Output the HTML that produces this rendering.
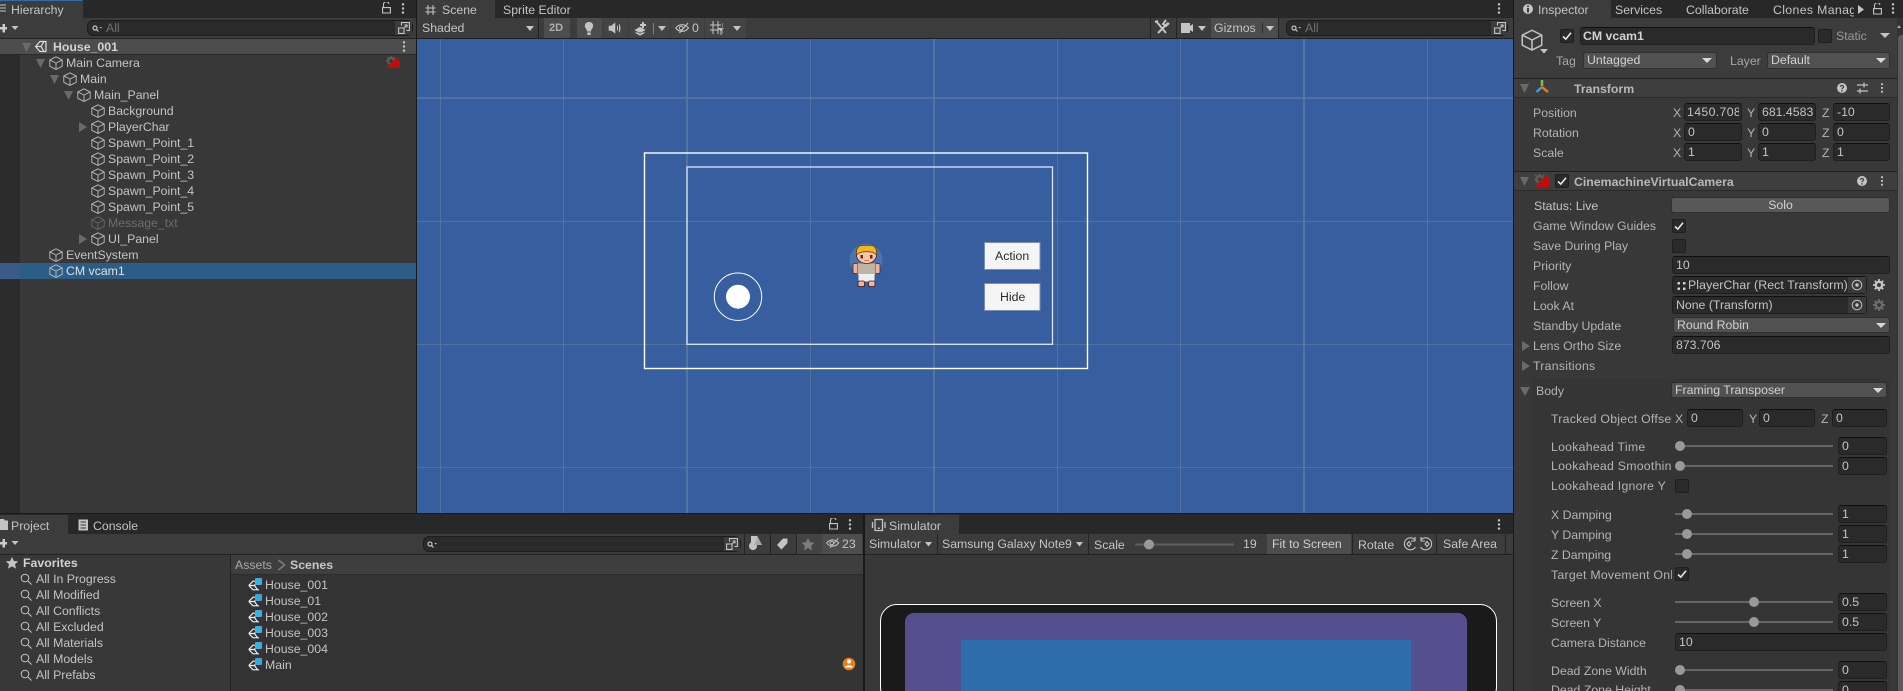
<!DOCTYPE html>
<html><head><meta charset="utf-8"><title>Unity Editor</title>
<style>
html,body{margin:0;padding:0;background:#191919}
#r{position:relative;width:1903px;height:691px;overflow:hidden;background:#191919;font-family:"Liberation Sans",sans-serif;filter:blur(.3px)}
#r div,#r span{position:absolute;box-sizing:border-box}
.t{white-space:nowrap;font-size:12.3px;line-height:16px;height:16px;color:#c4c4c4}
.b{font-weight:bold}
.m{color:#6f6f6f}
.f{background:#2a2a2a;border:1px solid #1f1f1f;border-top-color:#0f0f0f;border-radius:3px;height:18px;font-size:12.3px;line-height:17px;color:#c4c4c4;padding-left:3px;white-space:nowrap;overflow:hidden}
.d{background:#515151;border:1px solid #303030;border-radius:3px;height:17px;font-size:12.3px;line-height:14px;color:#d2d2d2;padding-left:3px;white-space:nowrap}
.c{background:#2a2a2a;border:1px solid #1f1f1f;border-radius:2px;width:14px;height:14px}
.clip{overflow:hidden;height:16px}
.s{background:#232323}
.g{background:#4d4d4d}
.w{letter-spacing:.25px}
</style></head><body><div id="r">

<!-- Hierarchy -->
<div style="left:0;top:0;width:416px;height:513px;background:#383838"></div>
<div style="left:0;top:0;width:416px;height:18px;background:#282828"></div>
<div style="left:0;top:0;width:83px;height:19px;background:#3c3c3c"></div>
<div style="left:0;top:0;width:83px;height:1px;background:#2f6ea5"></div>
<div style="left:0;top:18px;width:416px;height:20px;background:#3c3c3c"></div>
<div style="left:0;top:38px;width:416px;height:1px;background:#232323"></div>
<div style="left:0;top:39px;width:20px;height:474px;background:#2c2c2c"></div>
<div style="left:87px;top:20px;width:326px;height:16px;background:#2a2a2a;border:1px solid #1d1d1d;border-radius:6px"></div>
<div style="left:395px;top:21px;width:17px;height:14px;background:#3c3c3c"></div>
<div style="left:0;top:39px;width:416px;height:16px;background:#4d4d4d;border-bottom:1px solid #2a2a2a"></div>
<div style="left:0;top:263px;width:20px;height:16px;background:#3b5a88"></div>
<div style="left:20px;top:263px;width:396px;height:16px;background:#2c5d87"></div>

<!-- Scene -->
<div style="left:417px;top:0;width:1096px;height:18px;background:#282828"></div>
<div style="left:417px;top:0;width:78px;height:19px;background:#3c3c3c"></div>
<div style="left:417px;top:18px;width:1096px;height:20px;background:#3c3c3c"></div>
<div style="left:417px;top:38px;width:1096px;height:1px;background:#1f1f1f"></div>
<div class="g" style="left:544px;top:18px;width:26px;height:20px"></div>
<div class="g" style="left:577px;top:18px;width:25px;height:20px"></div>
<div style="left:603px;top:18px;width:25px;height:20px;background:#444"></div>
<div style="left:629px;top:18px;width:41px;height:20px;background:#444"></div>
<div style="left:671px;top:18px;width:33px;height:20px;background:#444"></div>
<div style="left:705px;top:18px;width:41px;height:20px;background:#444"></div>
<div class="s" style="left:538px;top:18px;width:1px;height:20px"></div>
<div class="s" style="left:1150px;top:18px;width:1px;height:20px"></div>
<div class="s" style="left:1176px;top:18px;width:1px;height:20px"></div>
<div class="s" style="left:1278px;top:18px;width:1px;height:20px"></div>
<div class="g" style="left:1211px;top:18px;width:67px;height:20px"></div>
<div style="left:1262px;top:23px;width:1px;height:11px;background:#2e2e2e"></div>
<div style="left:1286px;top:20px;width:222px;height:16px;background:#2a2a2a;border:1px solid #1d1d1d;border-radius:6px"></div>
<div style="left:1491px;top:21px;width:16px;height:14px;background:#3c3c3c"></div>
<div style="left:417px;top:39px;width:1096px;height:474px;background:#375f9f"></div>

<!-- Project -->
<div style="left:0;top:514px;width:863px;height:177px;background:#383838"></div>
<div style="left:0;top:514px;width:863px;height:20px;background:#282828"></div>
<div style="left:0;top:515px;width:68px;height:20px;background:#3c3c3c"></div>
<div style="left:0;top:534px;width:863px;height:20px;background:#3c3c3c"></div>
<div style="left:0;top:554px;width:863px;height:1px;background:#232323"></div>
<div style="left:231px;top:555px;width:632px;height:20px;background:#3e3e3e;border-bottom:1px solid #2c2c2c"></div>
<div style="left:231px;top:575px;width:632px;height:116px;background:#333"></div>
<div style="left:230px;top:555px;width:1px;height:136px;background:#232323"></div>
<div style="left:423px;top:536px;width:318px;height:16px;background:#2a2a2a;border:1px solid #1d1d1d;border-radius:6px"></div>
<div style="left:724px;top:537px;width:16px;height:14px;background:#3c3c3c"></div>
<div class="s" style="left:744px;top:534px;width:1px;height:20px"></div>
<div class="s" style="left:770px;top:534px;width:1px;height:20px"></div>
<div class="s" style="left:796px;top:534px;width:1px;height:20px"></div>
<div style="left:797px;top:534px;width:25px;height:20px;background:#444"></div>
<div class="g" style="left:822px;top:534px;width:40px;height:20px"></div>

<!-- Simulator -->
<div style="left:865px;top:514px;width:648px;height:177px;background:#383838"></div>
<div style="left:865px;top:514px;width:648px;height:20px;background:#282828"></div>
<div style="left:865px;top:515px;width:94px;height:20px;background:#3c3c3c"></div>
<div style="left:865px;top:534px;width:648px;height:20px;background:#3c3c3c"></div>
<div style="left:865px;top:554px;width:648px;height:1px;background:#232323"></div>
<div class="s" style="left:937px;top:534px;width:1px;height:20px"></div>
<div class="s" style="left:1088px;top:534px;width:1px;height:20px"></div>
<div class="g" style="left:1267px;top:534px;width:84px;height:20px"></div>
<div class="s" style="left:1352px;top:534px;width:1px;height:20px"></div>
<div class="s" style="left:1436px;top:534px;width:1px;height:20px"></div>
<div class="s" style="left:1505px;top:534px;width:1px;height:20px"></div>
<div style="left:880px;top:604px;width:617px;height:100px;background:#1a1a1a;border:1px solid #fff;border-radius:17px"></div>
<div style="left:905px;top:613px;width:562px;height:90px;background:#554f90;border-radius:9px"></div>
<div style="left:961px;top:640px;width:450px;height:60px;background:#2d6dab"></div>

<!-- Inspector -->
<div style="left:1514px;top:0;width:389px;height:691px;background:#383838"></div>
<div style="left:1514px;top:0;width:389px;height:18px;background:#282828"></div>
<div style="left:1514px;top:0;width:97px;height:19px;background:#3c3c3c"></div>
<div style="left:1514px;top:18px;width:383px;height:60px;background:#3c3c3c"></div>
<div style="left:1514px;top:78px;width:383px;height:1px;background:#1f1f1f"></div>
<div style="left:1514px;top:79px;width:383px;height:19px;background:#3e3e3e;border-bottom:1px solid #2a2a2a"></div>
<div style="left:1514px;top:171px;width:383px;height:1px;background:#1f1f1f"></div>
<div style="left:1514px;top:172px;width:383px;height:19px;background:#3e3e3e;border-bottom:1px solid #2a2a2a"></div>
<div style="left:1532px;top:378px;width:358px;height:313px;background:#353535"></div>
<div style="left:1897px;top:18px;width:6px;height:673px;background:#323232"></div>
<div style="left:1898px;top:35px;width:5px;height:656px;background:#5a5a5a;border-radius:3px 0 0 0"></div>

<div class="c" style="left:1560px;top:29px"></div>
<div class="f b" style="left:1580px;top:27px;width:235px;padding-left:2px;color:#d2d2d2">CM vcam1</div>
<div class="c" style="left:1818px;top:29px"></div>
<div class="d" style="left:1583px;top:52px;width:134px">Untagged</div>
<div class="d" style="left:1767px;top:52px;width:123px">Default</div>

<div class="f" style="left:1684px;top:103px;width:58px"><span style="left:2px;top:0;width:52px;height:16px;overflow:hidden;letter-spacing:.35px">1450.708</span></div>
<div class="f" style="left:1758px;top:103px;width:58px">681.4583</div>
<div class="f" style="left:1833px;top:103px;width:57px">-10</div>
<div class="f" style="left:1684px;top:123px;width:58px">0</div>
<div class="f" style="left:1758px;top:123px;width:58px">0</div>
<div class="f" style="left:1833px;top:123px;width:57px">0</div>
<div class="f" style="left:1684px;top:143px;width:58px">1</div>
<div class="f" style="left:1758px;top:143px;width:58px">1</div>
<div class="f" style="left:1833px;top:143px;width:57px">1</div>

<div class="c" style="left:1555px;top:174px"></div>
<div class="d" style="left:1671px;top:197px;width:219px;height:16px;background:#585858;text-align:center;padding:0;color:#d2d2d2;line-height:14px">Solo</div>
<div class="c" style="left:1672px;top:219px"></div>
<div class="c" style="left:1672px;top:239px"></div>
<div class="f" style="left:1672px;top:256px;width:218px">10</div>
<div class="f" style="left:1672px;top:276px;width:195px"><span style="left:15px;top:0;width:160px;height:17px;overflow:hidden;white-space:nowrap;letter-spacing:.1px">PlayerChar (Rect Transform)</span></div>
<div style="left:1848px;top:277px;width:18px;height:16px;background:#3a3a3a"></div>
<div class="f" style="left:1672px;top:296px;width:195px">None (Transform)</div>
<div style="left:1848px;top:297px;width:18px;height:16px;background:#3a3a3a"></div>
<div class="d" style="left:1673px;top:317px;width:217px;height:16px">Round Robin</div>
<div class="f" style="left:1672px;top:336px;width:218px">873.706</div>
<div class="d" style="left:1671px;top:382px;width:216px;height:16px">Framing Transposer</div>
<div class="f" style="left:1687px;top:409px;width:56px">0</div>
<div class="f" style="left:1759px;top:409px;width:56px">0</div>
<div class="f" style="left:1832px;top:409px;width:55px">0</div>
<div class="f" style="left:1838px;top:437px;width:49px">0</div>
<div class="f" style="left:1838px;top:457px;width:49px">0</div>
<div class="c" style="left:1675px;top:479px"></div>
<div class="f" style="left:1838px;top:505px;width:49px">1</div>
<div class="f" style="left:1838px;top:525px;width:49px">1</div>
<div class="f" style="left:1838px;top:545px;width:49px">1</div>
<div class="c" style="left:1675px;top:567px"></div>
<div class="f" style="left:1838px;top:593px;width:49px">0.5</div>
<div class="f" style="left:1838px;top:613px;width:49px">0.5</div>
<div class="f" style="left:1675px;top:633px;width:212px">10</div>
<div class="f" style="left:1838px;top:661px;width:49px">0</div>
<div class="f" style="left:1838px;top:681px;width:49px">0</div>

<!-- Vector overlay: grid, gizmos, icons -->
<svg width="1903" height="691" viewBox="0 0 1903 691" style="position:absolute;left:0;top:0" xmlns="http://www.w3.org/2000/svg">
<defs>
<symbol id="cube" viewBox="0 0 14 14" overflow="visible"><path d="M7 .8 13.2 3.9V10.3L7 13.4.8 10.3V3.9ZM.8 3.9 7 7 13.2 3.9M7 7V13.4" fill="none" stroke="currentColor" stroke-width=".95" stroke-linejoin="round"/></symbol>
<symbol id="mag" viewBox="0 0 12 12"><circle cx="5" cy="5" r="3.8" fill="none" stroke="#c4c4c4" stroke-width="1"/><path d="M8 8 11.5 11.500" stroke="#c4c4c4" stroke-width="1.100"/></symbol>
<symbol id="srch" viewBox="0 0 10 8"><circle cx="3" cy="3" r="2" fill="none" stroke="#c4c4c4" stroke-width="1.2"/><path d="M4.5 4.5 6.5 6.5" stroke="#c4c4c4" stroke-width="1.2"/><path d="M7.5 2H10L8.7 3.5Z" fill="#c4c4c4"/></symbol>
<symbol id="ext" viewBox="0 0 12 12"><path d="M3.5 3.5V.6H11.4V8.5H8.5M.6 6H6V11.4H.6ZM5.5 6.5 9 3M6.5 3H9V5.5" fill="none" stroke="#c4c4c4" stroke-width="1.1"/></symbol>
<symbol id="lock" viewBox="0 0 9 12"><path d="M1.5 5V3A2.5 2.5 0 0 1 7 2M.6 5.6H8.4V11H.6Z" fill="none" stroke="#c4c4c4" stroke-width="1.1"/></symbol>
<symbol id="dots" viewBox="0 0 3 12"><circle cx="1.5" cy="1.5" r="1.3" fill="#c4c4c4"/><circle cx="1.5" cy="6" r="1.3" fill="#c4c4c4"/><circle cx="1.5" cy="10.5" r="1.3" fill="#c4c4c4"/></symbol>
<symbol id="gear" viewBox="0 0 12 12"><circle cx="6" cy="6" r="3.2" fill="none" stroke="currentColor" stroke-width="2.4"/><path d="M6 0V12M0 6H12M1.8 1.8 10.2 10.2M10.2 1.8 1.8 10.2" stroke="currentColor" stroke-width="1.8" stroke-dasharray="2 8 2"/></symbol>
<symbol id="tgt" viewBox="0 0 12 12"><circle cx="6" cy="6" r="4.8" fill="none" stroke="#c4c4c4" stroke-width="1"/><circle cx="6" cy="6" r="1.7" fill="#c4c4c4"/></symbol>
<symbol id="cm" viewBox="0 0 14 12"><circle cx="5" cy="4.500" r="3" fill="none" stroke="#5c5c5c" stroke-width="2.200"/><path d="M5 1V-.5M1 4.500H-.5M5 8V9.500M2 1.500 1 .5M8 1.500 9 .5" stroke="#5c5c5c" stroke-width="1.400"/><path d="M1 11.500 3.500 8 11 .5 13.800 4.500V11.500Z" fill="#c00c0c"/></symbol>
<symbol id="help" viewBox="0 0 10 10"><circle cx="5" cy="5" r="5" fill="#c4c4c4"/><path d="M3.4 3.8C3.5 2 6.7 2 6.6 3.8 6.5 5 5 4.8 5 6.2" fill="none" stroke="#3e3e3e" stroke-width="1.2"/><circle cx="5" cy="7.9" r=".8" fill="#3e3e3e"/></symbol>
<symbol id="chk" viewBox="0 0 10 9"><path d="M1 5 3.8 7.6 9 1.2" fill="none" stroke="#e6e6e6" stroke-width="1.6"/></symbol>
<symbol id="sc" viewBox="0 0 16 13"><path d="M.8 6.5 5 2.2H11M.8 6.5 5 10.8H11M.8 6.5H6.5L9.5 10.8M6.5 6.5 9.5 2.2" fill="none" stroke="#eee" stroke-width="1.2"/></symbol>
<symbol id="eye" viewBox="0 0 16 12"><path d="M.8 6C4 1.5 10 1.5 13.5 6 10 10.5 4 10.5.8 6ZM4.5 11 13 1" fill="none" stroke="#c4c4c4" stroke-width="1.1"/><circle cx="6.2" cy="6" r="1.9" fill="none" stroke="#c4c4c4"/></symbol>
</defs>

<!-- scene grid -->
<g stroke="#54729f" stroke-width="1">
<path d="M440.5 39V513M563.5 39V513M810.5 39V513M1057.5 39V513M1180.5 39V513M1427.5 39V513M417 221.5H1513M417 344.5H1513M417 467.5H1513"/>
</g>
<path d="M687 39V513M934 39V513M1304 39V513M417 98H1513" stroke="#5b77a3" stroke-width="1.6"/>

<!-- gizmo rects -->
<rect x="644.5" y="153" width="443" height="215.5" fill="none" stroke="#fff" stroke-width="1.4"/>
<rect x="687" y="167" width="365.5" height="177.3" fill="none" stroke="#dfe5ef" stroke-width="1.3"/>
<circle cx="738" cy="296.7" r="23.7" fill="none" stroke="#fff" stroke-width="1"/>
<circle cx="738" cy="296.7" r="12" fill="#fff"/>
<rect x="984.5" y="242.5" width="55.5" height="27" fill="#f5f5f5" stroke="#7b8fb4" stroke-width="1"/>
<rect x="984.5" y="283.5" width="55.5" height="27" fill="#f5f5f5" stroke="#7b8fb4" stroke-width="1"/>

<!-- player sprite -->
<circle cx="866" cy="260" r="16.5" fill="#4a74b0"/>
<g>
<rect x="853" y="263.500" width="5" height="10" rx="1.500" fill="#f3b39b" stroke="#5a2418" stroke-width=".8"/>
<rect x="875" y="263.500" width="5" height="10" rx="1.500" fill="#f3b39b" stroke="#5a2418" stroke-width=".8"/>
<rect x="857.500" y="263" width="18" height="12" fill="#bdb6a5" stroke="#6e6458" stroke-width=".7"/>
<rect x="858.500" y="274" width="16" height="7.500" fill="#eef0ee"/>
<rect x="858" y="281" width="6.500" height="5.500" rx="1.500" fill="#f3b596" stroke="#3c1b12" stroke-width=".8"/>
<rect x="868.500" y="281" width="6.500" height="5.500" rx="1.500" fill="#f3b596" stroke="#3c1b12" stroke-width=".8"/>
<ellipse cx="866.500" cy="255" rx="10" ry="8.500" fill="#f8c4a8" stroke="#4a2014" stroke-width=".8"/>
<path d="M856.500 255C855.500 245 861 245 866.500 245.300 872 245 877.500 245 876.500 255 873.500 250.500 860 250.500 856.500 255Z" fill="#f0b81a" stroke="#5f3606" stroke-width=".8"/>
<rect x="860.500" y="255" width="2.500" height="3.500" fill="#5a2a1c"/><rect x="870" y="255" width="2.500" height="3.500" fill="#5a2a1c"/>
<rect x="864" y="260" width="5" height="1" fill="#c47f69"/>
</g>

<!-- hierarchy toolbar -->
<path d="M0 8H6M0 11H6M0 5H6" stroke="#c4c4c4" stroke-width="1"/>
<path d="M0 27H7V29.500H0ZM2.500 24H5V32.500H2.500Z" fill="#ccc"/><path d="M11.5 26H18.5L15 30Z" fill="#c4c4c4"/>
<use href="#srch" x="92" y="25" width="10" height="8"/>
<use href="#ext" x="398" y="22" width="12" height="12"/>
<use href="#lock" x="382" y="2" width="9" height="12"/>
<use href="#dots" x="401.5" y="3" width="3" height="11"/>

<!-- hierarchy tree -->
<path d="M22 43H31L26.5 52Z" fill="#6a6a6a"/>
<g fill="#6a6a6a"><path d="M36 59H45L40.5 68Z"/><path d="M50 75H59L54.5 84Z"/><path d="M64 91H73L68.5 100Z"/><path d="M79 122 87 127 79 132Z"/><path d="M79 234 87 239 79 244Z"/></g>
<path d="M35.5 46.5 40 41.5H46.5M35.5 46.5 40 51.5H46.5M35.5 46.5H41L44 51.5M41 46.5 44 41.5M46 42V51" fill="none" stroke="#ddd" stroke-width="1.2"/>
<use href="#dots" x="402.5" y="41" width="3" height="11"/>
<g style="color:#b8b8b8">
<use href="#cube" x="49" y="56" width="14" height="14"/>
<use href="#cube" x="63" y="72" width="14" height="14"/>
<use href="#cube" x="77" y="88" width="14" height="14"/>
<use href="#cube" x="91" y="104" width="14" height="14"/>
<use href="#cube" x="91" y="120" width="14" height="14"/>
<use href="#cube" x="91" y="136" width="14" height="14"/>
<use href="#cube" x="91" y="152" width="14" height="14"/>
<use href="#cube" x="91" y="168" width="14" height="14"/>
<use href="#cube" x="91" y="184" width="14" height="14"/>
<use href="#cube" x="91" y="200" width="14" height="14"/>
<use href="#cube" x="91" y="232" width="14" height="14"/>
<use href="#cube" x="49" y="248" width="14" height="14"/>
<use href="#cube" x="49" y="264" width="14" height="14"/>
</g>
<use href="#cube" x="91" y="216" width="14" height="14" style="color:#666"/>
<use href="#cm" x="386" y="56" width="14" height="13"/>

<!-- scene toolbar icons -->
<path d="M428 5V15M433 5V15M425.500 8H435.500M425.500 12H435.500" stroke="#c4c4c4" stroke-width="1"/>
<path d="M526 26H534L530 31Z" fill="#c4c4c4"/>
<path d="M589 22C585 22 584 25.5 585.5 28 586.5 29.5 587 30 587 31.5H591C591 30 591.5 29.5 592.5 28 594 25.5 593 22 589 22ZM587.3 32.5H590.7V35H587.3Z" fill="#c4c4c4"/>
<path d="M609 26H611.5L615 23V33L611.5 30.5H609ZM617 25.5C618 27 618 29.5 617 31M619 24C620.5 26 620.5 30.5 619 32.5" fill="#c4c4c4" stroke="#c4c4c4" stroke-width=".6"/>
<path d="M634 30 640 26.5 646 30 640 33.5ZM634 32.5 640 36 646 32.5" fill="#c4c4c4" stroke="#444" stroke-width=".5"/><path d="M642 22H644V24H646V26H644V28H642V26H640V24H642Z" fill="#c4c4c4"/>
<rect x="653" y="23" width="1" height="11" fill="#7d7d7d"/>
<path d="M658 26H666L662 31Z" fill="#c4c4c4"/>
<use href="#eye" x="675" y="22" width="16" height="12"/>
<path d="M713 21V34M718 21V34M710 25H721M710 30H719" stroke="#c4c4c4" stroke-width="1"/><path d="M718 28H724L721.5 31V35H720.5V31Z" fill="#c4c4c4"/>
<rect x="722" y="23" width="1" height="11" fill="#7d7d7d"/>
<path d="M733 26H741L737 31Z" fill="#c4c4c4"/>
<path d="M1156 21 1166 33M1158 33 1168 23M1166 20 1163 24 1166 26 1169 23M1155 22 1158 21" stroke="#c4c4c4" stroke-width="2" fill="none"/>
<rect x="1181" y="23" width="9" height="10" fill="#c4c4c4"/><path d="M1190 26 1193 24V32L1190 30Z" fill="#c4c4c4"/>
<path d="M1198 26H1206L1202 31Z" fill="#c4c4c4"/>
<path d="M1266 26H1274L1270 31Z" fill="#c4c4c4"/>
<use href="#srch" x="1291" y="25" width="10" height="8"/>
<use href="#ext" x="1494" y="22" width="12" height="12"/>
<use href="#dots" x="1497.5" y="3" width="3" height="11"/>

<!-- project tabs/toolbar -->
<path d="M0 519H4L5 520.5H8V530H0Z" fill="#c4c4c4"/>
<path d="M78.5 519.5H88V530.5H78.5Z" fill="#c4c4c4"/><path d="M80.5 522H86M80.5 525H86M80.5 528H86" stroke="#383838"/>
<path d="M0 542H7V544.500H0ZM2.500 539H5V547.500H2.500Z" fill="#ccc"/><path d="M11.5 541H18.5L15 545Z" fill="#c4c4c4"/>
<path d="M12 557 13.9 561 18.2 561.4 15 564.3 16 568.6 12 566.4 8 568.6 9 564.3 5.800 561.400 10.100 561Z" fill="#c4c4c4"/>
<use href="#srch" x="427" y="541" width="10" height="8"/>
<use href="#ext" x="726" y="538" width="12" height="12"/>
<use href="#lock" x="829" y="518" width="9" height="12"/>
<use href="#dots" x="848.5" y="519" width="3" height="11"/>
<circle cx="753" cy="546" r="4" fill="#c4c4c4"/><rect x="751" y="536" width="6.500" height="6.500" fill="#c4c4c4"/><path d="M758 537 762 545H754Z" fill="#a8a8a8"/>
<path d="M777 545 783 538.500H787.500V543L781.500 549.500Z" fill="#c4c4c4"/>
<path d="M808 538 810 542.300 814.500 542.800 811 545.800 812 550.300 808 548 804 550.300 805 545.800 801.500 542.800 806 542.300Z" fill="#7e7e7e"/>
<use href="#eye" x="826" y="537" width="15" height="12"/>
<path d="M278.500 560 284.500 565 278.500 570" fill="none" stroke="#7d7d7d" stroke-width="1.500"/>
<use href="#mag" x="20" y="573" width="12" height="12"/>
<use href="#mag" x="20" y="589" width="12" height="12"/>
<use href="#mag" x="20" y="605" width="12" height="12"/>
<use href="#mag" x="20" y="621" width="12" height="12"/>
<use href="#mag" x="20" y="637" width="12" height="12"/>
<use href="#mag" x="20" y="653" width="12" height="12"/>
<use href="#mag" x="20" y="669" width="12" height="12"/>

<!-- scene assets -->
<g>
<use href="#sc" x="248" y="579" width="16" height="13"/><rect x="255" y="578" width="7" height="7" rx="1" fill="#3fb0de"/>
<use href="#sc" x="248" y="595" width="16" height="13"/><rect x="255" y="594" width="7" height="7" rx="1" fill="#3fa3dc"/>
<use href="#sc" x="248" y="611" width="16" height="13"/><rect x="255" y="610" width="7" height="7" rx="1" fill="#3fb0de"/>
<use href="#sc" x="248" y="627" width="16" height="13"/><rect x="255" y="626" width="7" height="7" rx="1" fill="#3fb0de"/>
<use href="#sc" x="248" y="643" width="16" height="13"/><rect x="255" y="642" width="7" height="7" rx="1" fill="#3fb0de"/>
<use href="#sc" x="248" y="659" width="16" height="13"/><rect x="255" y="658" width="7" height="7" rx="1" fill="#3fa3dc"/>
</g>
<circle cx="849" cy="664" r="6.300" fill="#e5801c"/><circle cx="849" cy="661.500" r="2" fill="#fff"/><path d="M845 667.500C845.500 664.500 852.500 664.500 853 667.500Z" fill="#fff"/>

<!-- simulator toolbar -->
<path d="M875 519.500H882.500V530.500H875ZM872.500 522V528M885 522V528" fill="none" stroke="#c4c4c4" stroke-width="1.300"/><rect x="877.800" y="527.500" width="2" height="1.500" fill="#c4c4c4"/>
<use href="#dots" x="1497.500" y="519" width="3" height="11"/>
<path d="M925 542H932L928.500 546.500Z" fill="#c4c4c4"/>
<path d="M1076 542H1083L1079.500 546.500Z" fill="#c4c4c4"/>
<rect x="1135" y="543.500" width="99" height="2" fill="#5f5f5f"/><circle cx="1149" cy="544.500" r="5" fill="#999"/>
<g fill="none" stroke="#c4c4c4" stroke-width="1.100"><path d="M1415 540A6 6 0 1 0 1415.500 547M1415 537V541H1411"/><path d="M1409 544 1411 541.500 1413 544 1411 546.500Z" transform="translate(-2 0)"/><path d="M1421 540A6 6 0 1 1 1420.500 547M1421 537V541H1425"/><path d="M1425 544 1427 541.500 1429 544 1427 546.500Z"/></g>

<!-- inspector icons -->
<circle cx="1528" cy="9" r="5" fill="#c4c4c4"/><rect x="1527" y="8" width="2" height="4.500" fill="#3c3c3c"/><rect x="1527" y="5.500" width="2" height="1.500" fill="#3c3c3c"/>
<path d="M1858 5 1864 9.500 1858 14Z" fill="#c4c4c4"/>
<use href="#lock" x="1873" y="3" width="9" height="12"/>
<use href="#dots" x="1891.500" y="3" width="3" height="11"/>
<path d="M1899 25 1901 28H1897Z" fill="#aaa"/>
<use href="#cube" x="1521" y="29" width="22" height="22" style="color:#c4c4c4"/>
<path d="M1540 49H1548L1544 53.500Z" fill="#c4c4c4"/>
<use href="#chk" x="1562" y="31.500" width="10" height="9"/>
<path d="M1880 33H1890L1885 38Z" fill="#c4c4c4"/>
<path d="M1702 58H1712L1707 63Z" fill="#d8d8d8"/>
<path d="M1876 58H1886L1881 63Z" fill="#d8d8d8"/>
<path d="M1520 84H1529L1524.500 93Z" fill="#6a6a6a"/>
<path d="M1542 86V80" stroke="#7fc242" stroke-width="2.500"/><path d="M1542 87 1536.500 92" stroke="#37a2e0" stroke-width="2.500"/><path d="M1542 87 1548 92" stroke="#e4752a" stroke-width="2.500"/>
<use href="#help" x="1837" y="83" width="10" height="10"/>
<path d="M1857 85H1868M1857 91H1868M1864 82.500V87.500M1860 88.500V93.500" stroke="#c4c4c4" stroke-width="1.200"/>
<use href="#dots" x="1880.500" y="83" width="3" height="10"/>
<path d="M1520 177H1529L1524.500 186Z" fill="#6a6a6a"/>
<use href="#cm" x="1534" y="174" width="16" height="14"/>
<use href="#chk" x="1557" y="176.500" width="10" height="9"/>
<use href="#help" x="1857" y="176" width="10" height="10"/>
<use href="#dots" x="1880.500" y="176" width="3" height="10"/>
<use href="#chk" x="1674" y="221.500" width="10" height="9"/>
<g fill="#d4d4d4"><rect x="1677.500" y="282" width="2.500" height="2.500" rx=".5"/><rect x="1683" y="282" width="2.500" height="2.500" rx=".5"/><rect x="1677.500" y="287.500" width="2.500" height="2.500" rx=".5"/><rect x="1683" y="287.500" width="2.500" height="2.500" rx=".5"/></g>
<use href="#tgt" x="1851" y="279" width="12" height="12"/>
<use href="#tgt" x="1851" y="299" width="12" height="12"/>
<use href="#gear" x="1873" y="279" width="12" height="12" style="color:#c4c4c4"/>
<use href="#gear" x="1873" y="299" width="12" height="12" style="color:#6c6c6c"/>
<path d="M1876 323H1886L1881 328Z" fill="#d8d8d8"/>
<path d="M1522 341 1530 346 1522 351Z" fill="#6a6a6a"/>
<path d="M1522 361 1530 366 1522 371Z" fill="#6a6a6a"/>
<path d="M1520 387H1530L1525 396Z" fill="#6a6a6a"/>
<path d="M1873 388H1883L1878 393Z" fill="#d8d8d8"/>
<g fill="#666">
<rect x="1675" y="445" width="158" height="2"/><rect x="1675" y="465" width="158" height="2"/>
<rect x="1675" y="513" width="158" height="2"/><rect x="1675" y="533" width="158" height="2"/><rect x="1675" y="553" width="158" height="2"/>
<rect x="1675" y="601" width="158" height="2"/><rect x="1675" y="621" width="158" height="2"/>
<rect x="1675" y="669" width="158" height="2"/><rect x="1675" y="689" width="158" height="2"/>
</g>
<g fill="#999">
<circle cx="1680" cy="446" r="5"/><circle cx="1680" cy="466" r="5"/>
<circle cx="1687" cy="514" r="5"/><circle cx="1687" cy="534" r="5"/><circle cx="1687" cy="554" r="5"/>
<circle cx="1754" cy="602" r="5"/><circle cx="1754" cy="622" r="5"/>
<circle cx="1680" cy="670" r="5"/><circle cx="1680" cy="690" r="5"/>
</g>
<use href="#chk" x="1677" y="569.500" width="10" height="9"/>
</svg>

<!-- Text -->
<div class="t" style="left:11px;top:2px">Hierarchy</div>
<div class="t m" style="left:106px;top:20px">All</div>
<div class="t b" style="left:53px;top:39px;color:#d2d2d2">House_001</div>
<div class="t" style="left:66px;top:55px">Main Camera</div>
<div class="t" style="left:80px;top:71px">Main</div>
<div class="t" style="left:94px;top:87px">Main_Panel</div>
<div class="t" style="left:108px;top:103px">Background</div>
<div class="t" style="left:108px;top:119px">PlayerChar</div>
<div class="t" style="left:108px;top:135px">Spawn_Point_1</div>
<div class="t" style="left:108px;top:151px">Spawn_Point_2</div>
<div class="t" style="left:108px;top:167px">Spawn_Point_3</div>
<div class="t" style="left:108px;top:183px">Spawn_Point_4</div>
<div class="t" style="left:108px;top:199px">Spawn_Point_5</div>
<div class="t" style="left:108px;top:215px;color:#6d6d6d">Message_txt</div>
<div class="t" style="left:108px;top:231px">UI_Panel</div>
<div class="t" style="left:66px;top:247px">EventSystem</div>
<div class="t" style="left:66px;top:263px;color:#e0e0e0">CM vcam1</div>

<div class="t" style="left:442px;top:2px">Scene</div>
<div class="t" style="left:503px;top:2px">Sprite Editor</div>
<div class="t" style="left:422px;top:20px">Shaded</div>
<div class="t b" style="left:549px;top:20px;font-size:11px;color:#b0b0b0">2D</div>
<div class="t" style="left:692px;top:20px">0</div>
<div class="t" style="left:1214px;top:20px">Gizmos</div>
<div class="t m" style="left:1305px;top:20px">All</div>

<div class="t" style="left:11px;top:518px">Project</div>
<div class="t" style="left:93px;top:518px">Console</div>
<div class="t" style="left:842px;top:536px">23</div>
<div class="t b" style="left:23px;top:555px;color:#d2d2d2">Favorites</div>
<div class="t" style="left:36px;top:571px">All In Progress</div>
<div class="t" style="left:36px;top:587px">All Modified</div>
<div class="t" style="left:36px;top:603px">All Conflicts</div>
<div class="t" style="left:36px;top:619px">All Excluded</div>
<div class="t" style="left:36px;top:635px">All Materials</div>
<div class="t" style="left:36px;top:651px">All Models</div>
<div class="t" style="left:36px;top:667px">All Prefabs</div>
<div class="t" style="left:235px;top:557px;color:#a8a8a8">Assets</div>
<div class="t b" style="left:290px;top:557px;color:#c8c8c8">Scenes</div>
<div class="t" style="left:265px;top:577px">House_001</div>
<div class="t" style="left:265px;top:593px">House_01</div>
<div class="t" style="left:265px;top:609px">House_002</div>
<div class="t" style="left:265px;top:625px">House_003</div>
<div class="t" style="left:265px;top:641px">House_004</div>
<div class="t" style="left:265px;top:657px">Main</div>

<div class="t" style="left:889px;top:518px">Simulator</div>
<div class="t" style="left:869px;top:536px">Simulator</div>
<div class="t" style="left:942px;top:536px">Samsung Galaxy Note9</div>
<div class="t" style="left:1094px;top:537px">Scale</div>
<div class="t" style="left:1243px;top:536px">19</div>
<div class="t" style="left:1272px;top:536px;color:#d0d0d0">Fit to Screen</div>
<div class="t" style="left:1358px;top:537px">Rotate</div>
<div class="t" style="left:1443px;top:536px">Safe Area</div>

<div class="t" style="left:995px;top:248px;color:#2b2b2b">Action</div>
<div class="t" style="left:1000px;top:289px;color:#2b2b2b">Hide</div>

<div class="t" style="left:1538px;top:2px">Inspector</div>
<div class="t" style="left:1615px;top:2px">Services</div>
<div class="t" style="left:1686px;top:2px">Collaborate</div>
<div class="t clip" style="left:1773px;top:2px;width:81px;letter-spacing:.35px">Clones Manager</div>
<div class="t" style="left:1836px;top:28px;color:#9a9a9a">Static</div>
<div class="t" style="left:1556px;top:53px;color:#a8a8a8">Tag</div>
<div class="t" style="left:1730px;top:53px;color:#a8a8a8">Layer</div>
<div class="t b" style="left:1574px;top:81px;color:#b8b8b8">Transform</div>
<div class="t" style="left:1533px;top:105px;color:#b4b4b4">Position</div>
<div class="t" style="left:1533px;top:125px;color:#b4b4b4">Rotation</div>
<div class="t" style="left:1533px;top:145px;color:#b4b4b4">Scale</div>
<div class="t" style="left:1673px;top:105px;color:#b4b4b4">X</div><div class="t" style="left:1747px;top:105px;color:#b4b4b4">Y</div><div class="t" style="left:1822px;top:105px;color:#b4b4b4">Z</div>
<div class="t" style="left:1673px;top:125px;color:#b4b4b4">X</div><div class="t" style="left:1747px;top:125px;color:#b4b4b4">Y</div><div class="t" style="left:1822px;top:125px;color:#b4b4b4">Z</div>
<div class="t" style="left:1673px;top:145px;color:#b4b4b4">X</div><div class="t" style="left:1747px;top:145px;color:#b4b4b4">Y</div><div class="t" style="left:1822px;top:145px;color:#b4b4b4">Z</div>
<div class="t b" style="left:1574px;top:174px;color:#b8b8b8">CinemachineVirtualCamera</div>
<div class="t" style="left:1534px;top:198px">Status: Live</div>
<div class="t" style="left:1533px;top:218px;color:#b4b4b4">Game Window Guides</div>
<div class="t" style="left:1533px;top:238px;color:#b4b4b4">Save During Play</div>
<div class="t" style="left:1533px;top:258px;color:#b4b4b4">Priority</div>
<div class="t" style="left:1533px;top:278px;color:#b4b4b4">Follow</div>
<div class="t" style="left:1533px;top:298px;color:#b4b4b4">Look At</div>
<div class="t" style="left:1533px;top:318px;color:#b4b4b4">Standby Update</div>
<div class="t" style="left:1533px;top:338px;color:#b4b4b4">Lens Ortho Size</div>
<div class="t w" style="left:1533px;top:358px;color:#b4b4b4">Transitions</div>
<div class="t" style="left:1536px;top:383px;color:#b4b4b4">Body</div>
<div class="t clip w" style="left:1551px;top:411px;width:121px;color:#b4b4b4">Tracked Object Offset</div>
<div class="t" style="left:1675px;top:411px;color:#b4b4b4">X</div><div class="t" style="left:1749px;top:411px;color:#b4b4b4">Y</div><div class="t" style="left:1821px;top:411px;color:#b4b4b4">Z</div>
<div class="t w" style="left:1551px;top:439px;color:#b4b4b4">Lookahead Time</div>
<div class="t clip w" style="left:1551px;top:458px;width:121px;color:#b4b4b4">Lookahead Smoothing</div>
<div class="t w" style="left:1551px;top:478px;color:#b4b4b4">Lookahead Ignore Y</div>
<div class="t" style="left:1551px;top:507px;color:#b4b4b4">X Damping</div>
<div class="t" style="left:1551px;top:527px;color:#b4b4b4">Y Damping</div>
<div class="t" style="left:1551px;top:547px;color:#b4b4b4">Z Damping</div>
<div class="t clip w" style="left:1551px;top:567px;width:121px;color:#b4b4b4">Target Movement Only</div>
<div class="t" style="left:1551px;top:595px;color:#b4b4b4">Screen X</div>
<div class="t" style="left:1551px;top:615px;color:#b4b4b4">Screen Y</div>
<div class="t" style="left:1551px;top:635px;color:#b4b4b4">Camera Distance</div>
<div class="t" style="left:1551px;top:663px;color:#b4b4b4">Dead Zone Width</div>
<div class="t" style="left:1551px;top:682px;color:#b4b4b4">Dead Zone Height</div>
</div></body></html>
